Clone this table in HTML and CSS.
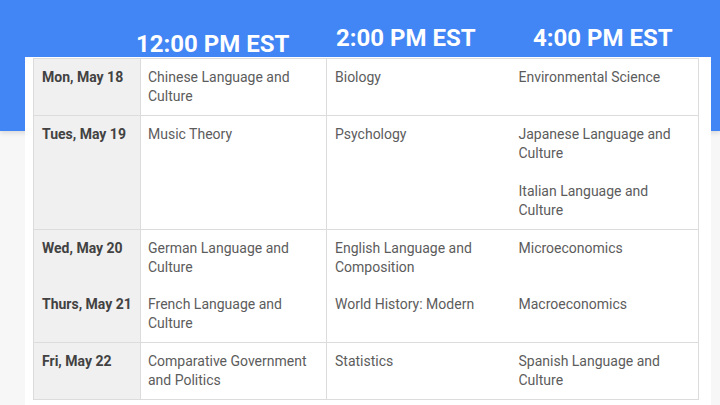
FILE: index.html
```html
<!DOCTYPE html>
<html>
<head>
<meta charset="utf-8">
<link rel="stylesheet" href="styles.css">
</head>
<body>
<div class="slide">
  <div class="band">
    <div class="time t1">12:00 PM EST</div>
    <div class="time t2">2:00 PM EST</div>
    <div class="time t3">4:00 PM EST</div>
  </div>
  <div class="card">
    <table class="sched">
      <colgroup>
        <col class="c1"><col class="c2"><col class="c3"><col class="c4">
      </colgroup>
      <tr>
        <td class="day">Mon, May 18</td>
        <td>Chinese Language and Culture</td>
        <td class="mid">Biology</td>
        <td>Environmental Science</td>
      </tr>
      <tr>
        <td class="day">Tues, May 19</td>
        <td>Music Theory</td>
        <td class="mid">Psychology</td>
        <td><div class="para">Japanese Language and Culture</div><div>Italian Language and Culture</div></td>
      </tr>
      <tr class="joined">
        <td class="day">Wed, May 20</td>
        <td>German Language and Culture</td>
        <td class="mid">English Language and Composition</td>
        <td>Microeconomics</td>
      </tr>
      <tr>
        <td class="day">Thurs, May 21</td>
        <td>French Language and Culture</td>
        <td class="mid">World History: Modern</td>
        <td>Macroeconomics</td>
      </tr>
      <tr>
        <td class="day">Fri, May 22</td>
        <td>Comparative Government and Politics</td>
        <td class="mid">Statistics</td>
        <td>Spanish Language and Culture</td>
      </tr>
    </table>
  </div>
</div>
</body>
</html>
```
FILE: styles.css
```css
html, body {
  margin: 0;
  padding: 0;
}
body {
  background: #f7f7f7;
  font-family: Roboto, "Liberation Sans", sans-serif;
  width: 720px;
  height: 405px;
  overflow: hidden;
}
.slide {
  width: 720px;
  height: 405px;
  overflow: hidden;
}
.band {
  height: 131px;
  background: #4285f4;
  box-shadow: 0 2px 5px rgba(0, 0, 0, 0.12);
  display: flex;
  align-items: flex-start;
  padding-left: 136px;
  box-sizing: border-box;
}
.time {
  color: #ffffff;
  font-weight: 700;
  font-size: 24px;
  line-height: 24px;
  white-space: nowrap;
}
.t1 {
  width: 200px;
  padding-top: 32px;
}
.t2 {
  width: 197px;
  padding-top: 26px;
}
.t3 {
  padding-top: 26px;
}
.card {
  position: relative;
  margin: -74px 0 0 25px;
  width: 686px;
  height: 360px;
  background: #ffffff;
  padding: 1px 13px 0 8px;
  box-sizing: border-box;
}
.sched {
  border-collapse: collapse;
  table-layout: fixed;
  width: 665px;
  border: 1px solid #dcdcdc;
  font-size: 14px;
  line-height: 19px;
  color: #5c5c5c;
}
.c1 { width: 107px; }
.c2 { width: 186px; }
.c3 { width: 185px; }
.c4 { width: 187px; }
.sched td {
  vertical-align: top;
  padding: 9px 8px 9px 7px;
  border-bottom: 1px solid #dcdcdc;
  border-right: 1px solid #dcdcdc;
  height: 38px;
}
.sched td.mid {
  border-right: none;
  padding-left: 8px;
}
.sched td.day {
  background: #f0f0f0;
  color: #424242;
  font-weight: 700;
  padding-left: 8px;
  white-space: nowrap;
}
.sched tr.joined td {
  border-bottom: none;
}
.para {
  margin-bottom: 19px;
}
```
